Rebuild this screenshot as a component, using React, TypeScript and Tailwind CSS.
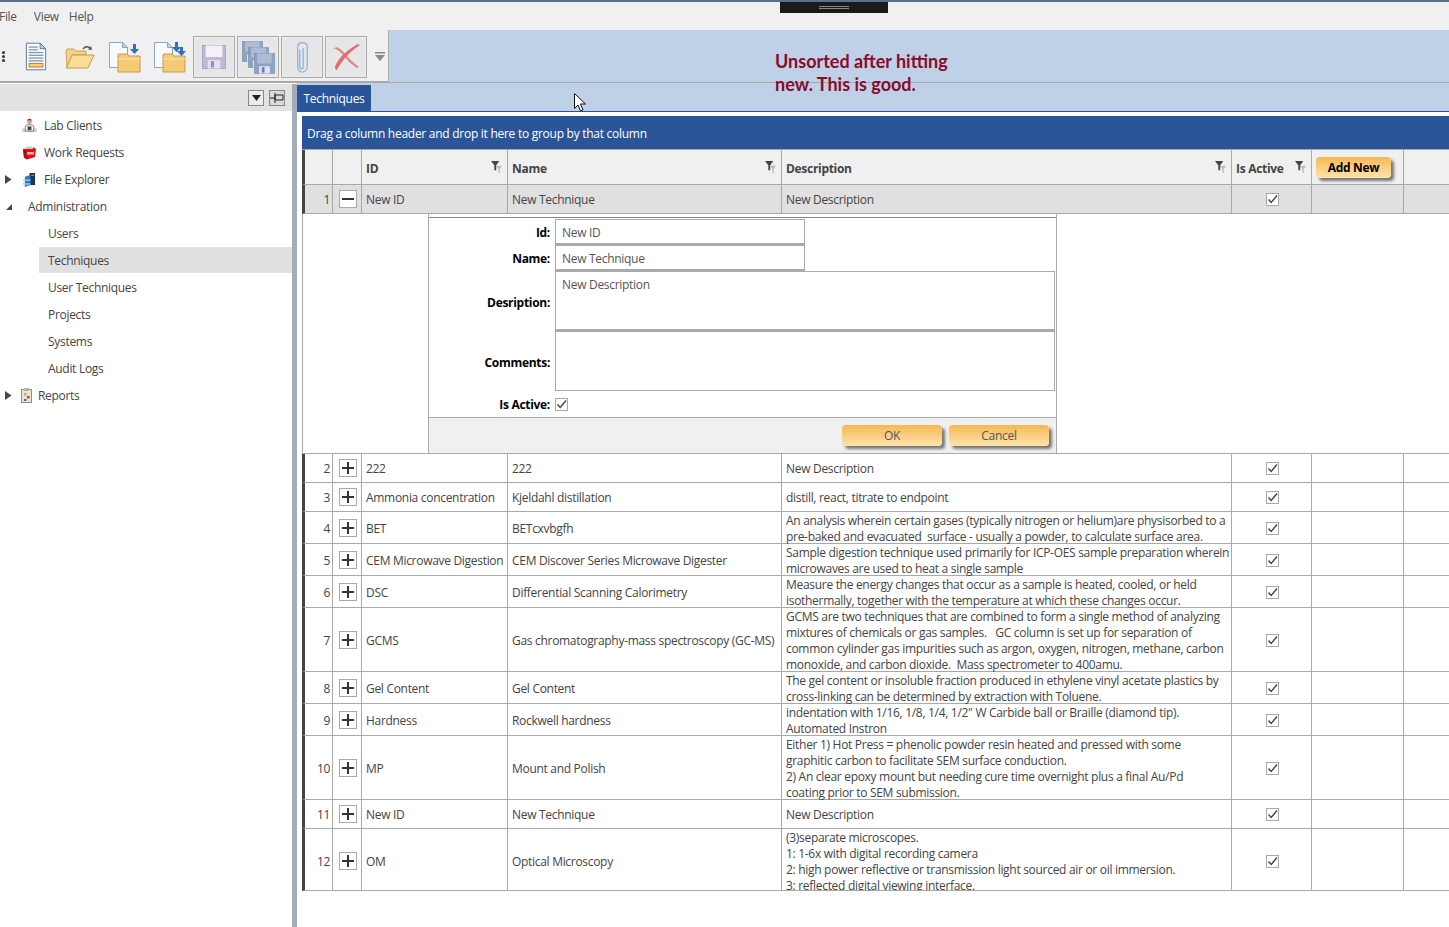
import type { ReactNode } from "react";

type Row = {
  n: number;
  id: string;
  name: string;
  desc: string[];
  h: string;
};

const rows: Row[] = [
  { n: 2, id: "222", name: "222", desc: ["New Description"], h: "h-[29px]" },
  { n: 3, id: "Ammonia concentration", name: "Kjeldahl distillation", desc: ["distill, react, titrate to endpoint"], h: "h-[29px]" },
  {
    n: 4,
    id: "BET",
    name: "BETcxvbgfh",
    desc: [
      "An analysis wherein certain gases (typically nitrogen or helium)are physisorbed to a",
      "pre-baked and evacuated  surface - usually a powder, to calculate surface area.",
    ],
    h: "h-[32px]",
  },
  {
    n: 5,
    id: "CEM Microwave Digestion",
    name: "CEM Discover Series Microwave Digester",
    desc: [
      "Sample digestion technique used primarily for ICP-OES sample preparation wherein",
      "microwaves are used to heat a single sample",
    ],
    h: "h-[32px]",
  },
  {
    n: 6,
    id: "DSC",
    name: "Differential Scanning Calorimetry",
    desc: [
      "Measure the energy changes that occur as a sample is heated, cooled, or held",
      "isothermally, together with the temperature at which these changes occur.",
    ],
    h: "h-[32px]",
  },
  {
    n: 7,
    id: "GCMS",
    name: "Gas chromatography-mass spectroscopy (GC-MS)",
    desc: [
      "GCMS are two techniques that are combined to form a single method of analyzing",
      "mixtures of chemicals or gas samples.   GC column is set up for separation of",
      "common cylinder gas impurities such as argon, oxygen, nitrogen, methane, carbon",
      "monoxide, and carbon dioxide.  Mass spectrometer to 400amu.",
    ],
    h: "h-[64px]",
  },
  {
    n: 8,
    id: "Gel Content",
    name: "Gel Content",
    desc: [
      "The gel content or insoluble fraction produced in ethylene vinyl acetate plastics by",
      "cross-linking can be determined by extraction with Toluene.",
    ],
    h: "h-[32px]",
  },
  {
    n: 9,
    id: "Hardness",
    name: "Rockwell hardness",
    desc: ['indentation with 1/16, 1/8, 1/4, 1/2" W Carbide ball or Braille (diamond tip).', "Automated Instron"],
    h: "h-[32px]",
  },
  {
    n: 10,
    id: "MP",
    name: "Mount and Polish",
    desc: [
      "Either 1) Hot Press = phenolic powder resin heated and pressed with some",
      "graphitic carbon to facilitate SEM surface conduction.",
      "2) An clear epoxy mount but needing cure time overnight plus a final Au/Pd",
      "coating prior to SEM submission.",
    ],
    h: "h-[64px]",
  },
  { n: 11, id: "New ID", name: "New Technique", desc: ["New Description"], h: "h-[29px]" },
  {
    n: 12,
    id: "OM",
    name: "Optical Microscopy",
    desc: [
      "(3)separate microscopes.",
      "1: 1-6x with digital recording camera",
      "2: high power reflective or transmission light sourced air or oil immersion.",
      "3: reflected digital viewing interface.",
    ],
    h: "h-[62px]",
  },
];

const gridCols = "grid grid-cols-[28px_29px_146px_274px_450px_80px_92px_1fr] grid-rows-[minmax(0,1fr)]";
const cell = "border-r border-[#a9a9a9] flex items-center min-w-0 overflow-hidden";

function FilterIcon() {
  return (
    <svg width="12" height="13" viewBox="0 0 13 14" className="shrink-0">
      <path d="M5 5h7L9.5 8.5V13H8V8.5z" fill="#bdbdbd" />
      <path d="M0 0h9L5.6 4.5V10H3.6V4.5z" fill="#444" />
    </svg>
  );
}

function CheckBox() {
  return (
    <span className="w-[13px] h-[13px] border border-[#a9a9a9] bg-white flex items-center justify-center shrink-0">
      <svg width="11" height="11" viewBox="0 0 11 11">
        <path d="M1.5 5.5 4.2 8.5 10 1.5" fill="none" stroke="#444" strokeWidth="1.4" />
      </svg>
    </span>
  );
}

function Expander({ open }: { open?: boolean }) {
  return (
    <span className="w-[18px] h-[18px] border border-[#a9a9a9] bg-white flex items-center justify-center">
      <svg width="12" height="12" viewBox="0 0 12 12">
        <rect x="0" y="5" width="12" height="2" fill="#333" />
        {!open && <rect x="5" y="0" width="2" height="12" fill="#333" />}
      </svg>
    </span>
  );
}

function OrangeButton({ children, className }: { children: ReactNode; className: string }) {
  return (
    <button
      className={`${className} rounded-[4px] bg-gradient-to-b from-[#f6b84e] to-[#fde3ac] shadow-[3px_3px_3px_#777] pt-[1px]`}
    >
      {children}
    </button>
  );
}

function DocIcon() {
  return (
    <svg width="22" height="29" viewBox="0 0 24 30">
      <path d="M1.5.5h15l6 6v23h-21z" fill="#fbfcff" stroke="#5a7192" />
      <path d="M16.5.5v6h6z" fill="#c3d3e6" stroke="#5a7192" />
      {[4, 7, 10, 13, 16, 19].map((y) => (
        <rect key={y} x="4" y={y} width={y < 8 ? 10 : 16} height="1.4" fill="#7f95b8" />
      ))}
      <rect x="4.5" y="22.5" width="15" height="4" fill="#f6d27e" stroke="#c9701c" />
    </svg>
  );
}

function OpenFolderIcon() {
  return (
    <svg width="30" height="26" viewBox="0 0 30 26">
      <path d="M2 23 1 7q0-2 2-2h6l2 2h10v4H8z" fill="#f5d08a" stroke="#c8a25c" />
      <path d="M1.500 24 7 11h22l-6 13z" fill="#fbdc96" stroke="#c39a52" />
      <path d="M18 5q3-4 7-1" fill="none" stroke="#555" strokeWidth="1.3" />
      <path d="M23 5.500 27 6 26 2z" fill="#555" />
    </svg>
  );
}

function DocFolderIcon({ double }: { double?: boolean }) {
  return (
    <svg width="32" height="32" viewBox="0 0 32 32">
      <path d="M.5 1.500h13l5 5v20H.5z" fill="#f8faff" stroke="#8ea4c4" />
      <path d="M13.500 1.500v5h5z" fill="#c3d3e6" stroke="#8ea4c4" />
      <path d="M9 31V14q0-1 1-1h8l2 2h11v16z" fill="#f6cb76" stroke="#c19a56" />
      <path d="M9 18h22" stroke="#fbe3ad" />
      <path d={double ? "M21 1h3v5h3l-4.500 5-4.500-5h3z" : "M24 3h3v5h3l-4.500 5-4.500-5h3z"} fill="#2f70bd" />
      {double && <path d="M26 6h3v4h3l-4.500 5-4.500-5h3z" fill="#2f70bd" />}
    </svg>
  );
}

function Floppy({ x, y, size, fill, dark, label }: { x: number; y: number; size: number; fill: string; dark: string; label: string }) {
  const s = size / 22;
  return (
    <g transform={`translate(${x} ${y}) scale(${s})`}>
      <rect width="22" height="22" fill={fill} stroke={dark} strokeWidth=".6" />
      <rect x="3" y="0" width="16" height="11" fill={label} />
      <rect x="5" y="14" width="12" height="8" fill="#e4e1ee" />
      <rect x="8" y="15" width="3" height="6" fill={dark} />
    </g>
  );
}

function ToolButton({ children }: { children: ReactNode }) {
  return (
    <span className="w-[42px] h-[42px] border border-[#a9a9a9] bg-[#e6e6e6] flex items-center justify-center shrink-0 shadow-[inset_0_0_0_1px_#ededed]">
      {children}
    </span>
  );
}

function NavArrow({ open }: { open?: boolean }) {
  return (
    <svg width="7" height="9" viewBox="0 0 7 9" className="absolute left-[5px] top-[10px]">
      {open ? <path d="M7 2v6H1z" fill="#444" /> : <path d="M0 0l6.500 4.500L0 9z" fill="#3d4856" />}
    </svg>
  );
}

function LabIcon() {
  return (
    <svg width="17" height="15" viewBox="0 0 16 16">
      <rect x="0" y="11" width="16" height="4" fill="#cfd3d6" />
      <circle cx="8" cy="4" r="2.600" fill="#d9a089" />
      <path d="M5 2.500 8 .5l3 2z" fill="#8b2b2b" />
      <path d="M3.500 14V9q0-2 4.500-2t4.500 2v5z" fill="#eef0f2" stroke="#555" strokeWidth=".7" />
      <rect x="6" y="9" width="4" height="4" fill="#444" />
    </svg>
  );
}

function RequestIcon() {
  return (
    <svg width="15" height="15" viewBox="0 0 15 15">
      <path d="M1 4l11-1.500 2 1.500-1 8-8 2.500-3-2z" fill="#e0101a" />
      <path d="M4 1.500h6L11 4H4z" fill="#bdd0d8" />
      <rect x="5" y="7" width="7" height="2.500" fill="#f5b5b5" />
      <path d="M1 4l3 2 1 8.500-3-2z" fill="#a80d14" />
    </svg>
  );
}

function CabinetIcon() {
  return (
    <svg width="13" height="16" viewBox="0 0 14 15">
      <path d="M7 0h6v13H7z" fill="#1d3556" />
      <path d="M2 4l6-2v11l-6 2z" fill="#2f79bd" />
      <rect x="0" y="7" width="8" height="1.500" fill="#9fcdea" />
      <rect x="0" y="11" width="8" height="1.500" fill="#9fcdea" />
      <rect x="9" y="2" width="3" height="1" fill="#85a5c6" />
    </svg>
  );
}

function ReportIcon() {
  return (
    <svg width="11" height="15" viewBox="0 0 11 15">
      <rect x=".5" y="1.500" width="10" height="13" fill="#e5e5dc" stroke="#8e8e84" />
      <rect x="3" y="0" width="5" height="3" fill="#b5b5a8" />
      <rect x="3" y="5" width="2.500" height="2.500" fill="#e8a52f" />
      <rect x="6" y="8" width="2.500" height="2.500" fill="#d03a2a" />
      <rect x="3" y="11" width="2.500" height="2" fill="#3a6cc0" />
    </svg>
  );
}

function NavItem({ label, pad, icon, arrow, selected }: { label: string; pad: string; icon?: ReactNode; arrow?: "open" | "closed"; selected?: boolean }) {
  return (
    <div className="relative h-[27px] flex items-center">
      {arrow && <NavArrow open={arrow === "open"} />}
      {icon && <span className="absolute left-[21px] top-[7px] w-[17px] flex justify-center">{icon}</span>}
      {selected && <div className="absolute left-[39px] right-0 top-[1px] bottom-0 bg-[#e0e0e0]" />}
      <span className={`${pad} relative pt-[3px]`}>{label}</span>
    </div>
  );
}

function DetailField({ label, height, labelPad = "pt-[2px]", children }: { label: string; height: string; labelPad?: string; children: ReactNode }) {
  return (
    <div className={`${height} flex items-center`}>
      <label className={`w-[121px] ${labelPad} text-right font-bold text-black shrink-0`}>{label}</label>
      <div className="ml-[5px] h-full">{children}</div>
    </div>
  );
}

function HeaderCell({ label, pad }: { label: string; pad: string }) {
  return (
    <div className={`${cell} ${pad} pr-[4px] font-bold justify-between`}>
      <span className="mt-[4px]">{label}</span>
      <FilterIcon />
    </div>
  );
}

export default function App() {
  return (
    <div className="relative w-[1449px] h-[927px] overflow-hidden bg-white flex flex-col font-['Open_Sans',sans-serif] text-[12px] tracking-[-0.3px] text-[#444]">
      <div className="h-[2px] bg-[#5b6f8e] shrink-0" />

      {/* menu */}
      <div className="h-[28px] bg-[#f0f0f0] shrink-0 flex items-center text-[#555] pt-[2px]">
        <span className="ml-[-1px]">File</span>
        <span className="ml-[17px]">View</span>
        <span className="ml-[10px]">Help</span>
      </div>

      {/* toolbar */}
      <div className="h-[53px] bg-[#bfd1e6] shrink-0 border-b border-[#a9a9a9]">
        <div className="w-[389px] h-full bg-[#f0f0f0] border-r border-b border-[#a9a9a9] flex items-center relative pt-[2px]">
          <span className="ml-[2px] flex flex-col gap-[1px]">
            <i className="w-[3px] h-[3px] rounded-full bg-[#333] block" />
            <i className="w-[3px] h-[3px] rounded-full bg-[#333] block" />
            <i className="w-[3px] h-[3px] rounded-full bg-[#333] block" />
          </span>
          <span className="ml-[20px] flex">
            <DocIcon />
          </span>
          <span className="ml-[18px] flex">
            <OpenFolderIcon />
          </span>
          <span className="ml-[14px] flex">
            <DocFolderIcon />
          </span>
          <span className="ml-[13px] flex">
            <DocFolderIcon double />
          </span>
          <span className="ml-[7px] flex gap-[2px] mt-[1px]">
            <ToolButton>
              <svg width="24" height="24" viewBox="0 0 24 24">
                <Floppy x={0.5} y={0.5} size={23} fill="#c2b6da" dark="#9a8abb" label="#f3f1f8" />
              </svg>
            </ToolButton>
            <ToolButton>
              <svg width="33" height="33" viewBox="0 0 33 33">
                <Floppy x={0.5} y={0.5} size={20} fill="#8ea3c4" dark="#6d82a5" label="#aebcd4" />
                <Floppy x={6.5} y={6.5} size={20} fill="#8ea3c4" dark="#6d82a5" label="#aebcd4" />
                <Floppy x={12.5} y={12.5} size={20} fill="#8ea3c4" dark="#6d82a5" label="#aebcd4" />
              </svg>
            </ToolButton>
            <ToolButton>
              <svg width="11" height="31" viewBox="0 0 11 31">
                <path d="M2.800 8v16.500q0 2.500 1.700 2.500t1.700-2.500V6" fill="none" stroke="#8bb0d8" strokeWidth="1.200" />
                <path d="M.7 9v15.500q0 5.500 4.500 5.500t5-5.500V5q0-4.300-4.700-4.300T.7 5v4" fill="none" stroke="#8bb0d8" strokeWidth="1.200" />
              </svg>
            </ToolButton>
            <ToolButton>
              <svg width="27" height="26" viewBox="0 0 27 26">
                <path d="M0 5q3-3 6-1 4 3 7 7 4 5 13 12-1 1-3 .5Q16 19 11 12 7 7 3 5 1 4 0 5z" fill="#e2868a" />
                <path d="M27 1q-1-1-3-.5Q14 6 8 13q-5 6-6 10 0 3 2 3 2-4 5-8Q15 9 27 1z" fill="#de6f73" />
              </svg>
            </ToolButton>
          </span>
          <svg width="10" height="9" viewBox="0 0 10 9" className="ml-[8px]">
            <rect width="10" height="1.500" fill="#888" />
            <path d="M0 3h10L5 9z" fill="#888" />
          </svg>
        </div>
      </div>

      <div className="flex-1 flex min-h-0">
        {/* sidebar */}
        <aside className="w-[297px] shrink-0 border-r-[5px] border-[#a3acb8] flex flex-col mt-[1px]">
          <div className="h-[27px] shrink-0 bg-[#e2e2e2] flex items-center justify-end gap-[5px] pr-[7px]">
            <span className="w-[16px] h-[16px] border border-[#888] bg-[#ececec] flex items-center justify-center">
              <svg width="9" height="6" viewBox="0 0 9 6">
                <path d="M0 0h9L4.500 6z" fill="#222" />
              </svg>
            </span>
            <span className="w-[16px] h-[16px] border border-[#888] bg-[#d9d9d9] flex items-center justify-center">
              <svg width="14" height="10" viewBox="0 0 14 10">
                <path d="M0 5h5M5 2h8v5H5zM5 0v10" fill="none" stroke="#222" />
              </svg>
            </span>
          </div>
          <nav>
            <NavItem label="Lab Clients" pad="pl-[44px]" icon={<LabIcon />} />
            <NavItem label="Work Requests" pad="pl-[44px]" icon={<RequestIcon />} />
            <NavItem label="File Explorer" pad="pl-[44px]" icon={<CabinetIcon />} arrow="closed" />
            <NavItem label="Administration" pad="pl-[28px]" arrow="open" />
            <NavItem label="Users" pad="pl-[48px]" />
            <NavItem label="Techniques" pad="pl-[48px]" selected />
            <NavItem label="User Techniques" pad="pl-[48px]" />
            <NavItem label="Projects" pad="pl-[48px]" />
            <NavItem label="Systems" pad="pl-[48px]" />
            <NavItem label="Audit Logs" pad="pl-[48px]" />
            <div className="relative h-[27px] flex items-center">
              <NavArrow />
              <span className="absolute left-[21px] top-[7px] flex">
                <ReportIcon />
              </span>
              <span className="pl-[38px] pt-[3px]">Reports</span>
            </div>
          </nav>
        </aside>

        {/* content */}
        <main className="flex-1 min-w-0 flex flex-col">
          <div className="h-[29px] shrink-0 bg-[#bfd1e6] border-b border-[#2a5699] flex items-end">
            <span className="h-[26px] w-[74px] bg-[#2a5699] text-white flex items-center justify-center pt-[2px]">Techniques</span>
          </div>

          <div className="pl-[5px] pt-[4px]">
            <div className="h-[34px] bg-[#2a5699] text-white flex items-center pl-[5px] border-b border-[#a9a9a9] pt-[3px] tracking-[-0.27px]">
              Drag a column header and drop it here to group by that column
            </div>

            {/* header */}
            <div className={`${gridCols} h-[35px] bg-[#f0f0f0] border-b border-[#a9a9a9] border-l-[3px] border-l-[#444]`}>
              <div className={cell} />
              <div className={cell} />
              <HeaderCell label="ID" pad="pl-[4px]" />
              <HeaderCell label="Name" pad="pl-[4px]" />
              <HeaderCell label="Description" pad="pl-[4px]" />
              <HeaderCell label="Is Active" pad="pl-[4px]" />
              <div className="border-r border-[#a9a9a9] pt-[7px] pl-[4px]">
                <OrangeButton className="w-[75px] h-[21px] font-bold text-black text-[12px]">Add New</OrangeButton>
              </div>
              <div />
            </div>

            {/* expanded row */}
            <div className={`${gridCols} h-[29px] bg-[#e0e0e0] border-b border-[#a9a9a9] border-l-[3px] border-l-[#444]`}>
              <div className={`${cell} justify-end pr-[2px] pt-[2px]`}>1</div>
              <div className={`${cell} justify-center pl-[2px]`}>
                <Expander open />
              </div>
              <div className={`${cell} pl-[4px] pt-[2px]`}>New ID</div>
              <div className={`${cell} pl-[4px] pt-[2px]`}>New Technique</div>
              <div className={`${cell} pl-[4px] pt-[2px]`}>New Description</div>
              <div className={`${cell} justify-center pl-[2px]`}>
                <CheckBox />
              </div>
              <div className={cell} />
              <div />
            </div>

            {/* detail form */}
            <div className="h-[240px] border-b border-l border-[#a9a9a9] pl-[125px]">
              <div className="w-[629px] h-full border-x border-[#a9a9a9] pt-[3px]">
                <div className="h-[200px] border-t border-[#888] pt-[1px]">
                  <DetailField label="Id:" height="h-[26px]">
                    <div className="w-[250px] h-full border border-b-2 border-[#a9a9a9] px-[6px] pt-[2px] flex items-center text-[#555]">New ID</div>
                  </DetailField>
                  <DetailField label="Name:" height="h-[26px]">
                    <div className="w-[250px] h-full border border-b-2 border-[#a9a9a9] px-[6px] pt-[2px] flex items-center text-[#555]">New Technique</div>
                  </DetailField>
                  <DetailField label="Desription:" height="h-[60px]" labelPad="pt-[4px]">
                    <div className="w-[500px] h-full border border-b-2 border-[#a9a9a9] px-[6px] pt-[4px] text-[#555]">New Description</div>
                  </DetailField>
                  <DetailField label="Comments:" height="h-[60px]" labelPad="pt-[4px]">
                    <div className="w-[500px] h-full border border-[#a9a9a9]" />
                  </DetailField>
                  <DetailField label="Is Active:" height="h-[26px]">
                    <div className="h-full flex items-center">
                      <CheckBox />
                    </div>
                  </DetailField>
                </div>
                <div className="h-[36px] border-t border-[#a9a9a9] bg-[#f0f0f0] flex justify-end gap-[7px] pt-[7px] pr-[7px]">
                  <OrangeButton className="w-[100px] h-[21px] text-[#555] text-[12px]">OK</OrangeButton>
                  <OrangeButton className="w-[100px] h-[21px] text-[#555] text-[12px]">Cancel</OrangeButton>
                </div>
              </div>
            </div>

            {/* remaining rows */}
            {rows.map((row) => {
              // row 12 is shorter than its text, the grid centres the other cells a little lower
              const last = row.n === 12;
              const textPad = last ? "pt-[4px]" : "pt-[2px]";
              const expandPad = last ? "pt-[2px]" : "";
              const checkPad = last ? "pt-[3px]" : row.desc.length > 1 ? "pt-[1px]" : "";
              return (
                <div key={row.n} className={`${gridCols} ${row.h} border-b border-[#a9a9a9] border-l-[3px] border-l-[#444] bg-white`}>
                  <div className={`${cell} justify-end pr-[2px] ${textPad}`}>{row.n}</div>
                  <div className={`${cell} justify-center pl-[2px] ${expandPad}`}>
                    <Expander />
                  </div>
                  <div className={`${cell} pl-[4px] ${textPad} whitespace-nowrap`}>{row.id}</div>
                  <div className={`${cell} pl-[4px] ${textPad} whitespace-nowrap`}>{row.name}</div>
                  {row.desc.length === 1 ? (
                    <div className={`${cell} pl-[4px] pt-[2px] whitespace-pre`}>{row.desc[0]}</div>
                  ) : (
                    <div className={`border-r border-[#a9a9a9] min-w-0 pl-[4px] pt-[1px] leading-[16px] whitespace-pre ${last ? "overflow-hidden" : ""}`}>
                      {row.desc.map((line) => (
                        <div key={line}>{line}</div>
                      ))}
                    </div>
                  )}
                  <div className={`${cell} justify-center pl-[2px] ${checkPad}`}>
                    <CheckBox />
                  </div>
                  <div className={cell} />
                  <div />
                </div>
              );
            })}
          </div>
        </main>
      </div>

      {/* window grip, annotation and mouse pointer sit on top of the capture */}
      <div className="absolute left-[780px] top-[2px] w-[108px] h-[11px] bg-[#1a1a1a] flex flex-col items-center justify-center gap-[1px]">
        <i className="w-[30px] h-px bg-[#888] block" />
        <i className="w-[30px] h-px bg-[#888] block" />
      </div>
      <div className="absolute left-[775px] top-[50px] font-['Lato',sans-serif] font-bold text-[18px] leading-[23px] tracking-normal text-[#8b0a2a]">
        Unsorted after hitting
        <br />
        new. This is good.
      </div>
      <svg width="13" height="20" viewBox="0 0 13 20" className="absolute left-[574px] top-[93px]">
        <path d="M.5.5v15l3.500-3.500 2.500 6 2.500-1-2.500-6h5z" fill="#fff" stroke="#111" />
      </svg>
    </div>
  );
}
